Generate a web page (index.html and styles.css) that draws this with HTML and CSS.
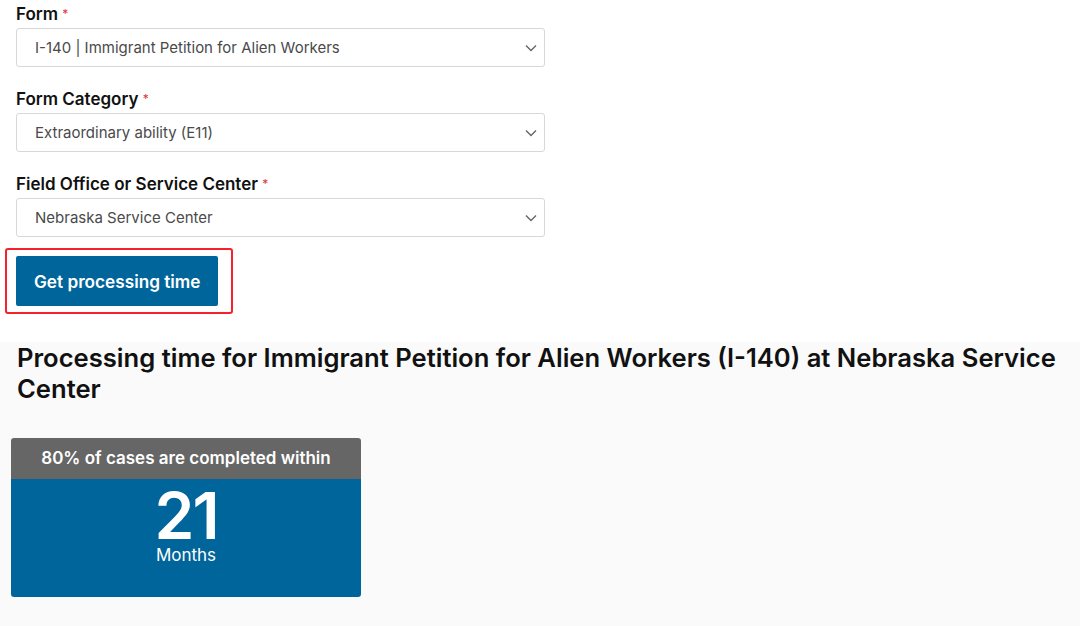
FILE: index.html
```html
<!DOCTYPE html>
<html lang="en">
<head>
    <meta charset="UTF-8">
    <title>Check Case Processing Times</title>
    <link rel="stylesheet" href="styles.css">
</head>
<body>
<div class="form-area">
    <div class="field">
        <label>Form <span class="req">*</span></label>
        <div class="select">
            <span>I-140 | Immigrant Petition for Alien Workers</span>
            <svg width="12" height="8" viewBox="0 0 12 8"><path d="M1 1.5l5 5 5-5" fill="none" stroke="#666" stroke-width="1.4"/></svg>
        </div>
    </div>
    <div class="field">
        <label>Form Category <span class="req">*</span></label>
        <div class="select">
            <span>Extraordinary ability (E11)</span>
            <svg width="12" height="8" viewBox="0 0 12 8"><path d="M1 1.5l5 5 5-5" fill="none" stroke="#666" stroke-width="1.4"/></svg>
        </div>
    </div>
    <div class="field">
        <label>Field Office or Service Center <span class="req">*</span></label>
        <div class="select">
            <span>Nebraska Service Center</span>
            <svg width="12" height="8" viewBox="0 0 12 8"><path d="M1 1.5l5 5 5-5" fill="none" stroke="#666" stroke-width="1.4"/></svg>
        </div>
    </div>
    <div class="highlight">
        <button class="btn">Get processing time</button>
    </div>
</div>

<div class="result">
    <h2>Processing time for Immigrant Petition for Alien Workers (I-140) at Nebraska Service Center</h2>
    <div class="card">
        <div class="card-head">80% of cases are completed within</div>
        <div class="card-body">
            <div class="num">21</div>
            <div class="unit">Months</div>
        </div>
    </div>
</div>
</body>
</html>
```

FILE: styles.css
```css
body {
    margin: 0;
    font-family: Inter, Lato, "Liberation Sans", sans-serif;
    color: #111;
    background: #fff;
}

.form-area {
    padding: 2px 16px 0;
    height: 340px;
}

.field {
    width: 529px;
    margin-bottom: 20px;
}

.field label {
    display: block;
    font-size: 17px;
    font-weight: 600;
    line-height: 24px;
    margin-bottom: 2px;
}

.field .req {
    color: #e0323c;
    font-size: 12px;
    vertical-align: top;
    font-weight: 400;
}

.select {
    display: flex;
    align-items: center;
    justify-content: space-between;
    height: 37px;
    border: 1px solid #d8d8d8;
    border-radius: 3px;
    padding: 0 7px 0 18px;
    font-size: 15px;
    color: #4a4a4a;
    background: #fff;
}

.highlight {
    display: inline-block;
    margin: -9px 0 0 -11px;
    padding: 6px 13px 6px 9px;
    border: 2px solid #f5222d;
    border-radius: 3px;
}

.btn {
    display: block;
    height: 50px;
    padding: 0 18px;
    border: 0;
    border-radius: 2px;
    background: #00659a;
    color: #fff;
    font-family: inherit;
    font-size: 17.2px;
    font-weight: 600;
}

.result {
    background: #fafafa;
    padding: 0 16px 30px 17px;
    min-height: 284px;
}

.result h2 {
    margin: 0;
    font-size: 25.6px;
    font-weight: 600;
    line-height: 31px;
}

.card {
    width: 350px;
    margin: 34px 0 0 -6px;
    border-radius: 3px;
    overflow: hidden;
    color: #fff;
    text-align: center;
}

.card-head {
    background: #666;
    height: 41px;
    line-height: 41px;
    font-size: 17px;
    font-weight: 600;
}

.card-body {
    background: #00659a;
    height: 118px;
    padding-top: 13px;
    box-sizing: border-box;
}

.card-body .num {
    font-size: 64px;
    font-weight: 600;
    line-height: 48px;
    letter-spacing: -2px;
}

.card-body .unit {
    margin-top: 3px;
    font-size: 17px;
    line-height: 24px;
}
```
